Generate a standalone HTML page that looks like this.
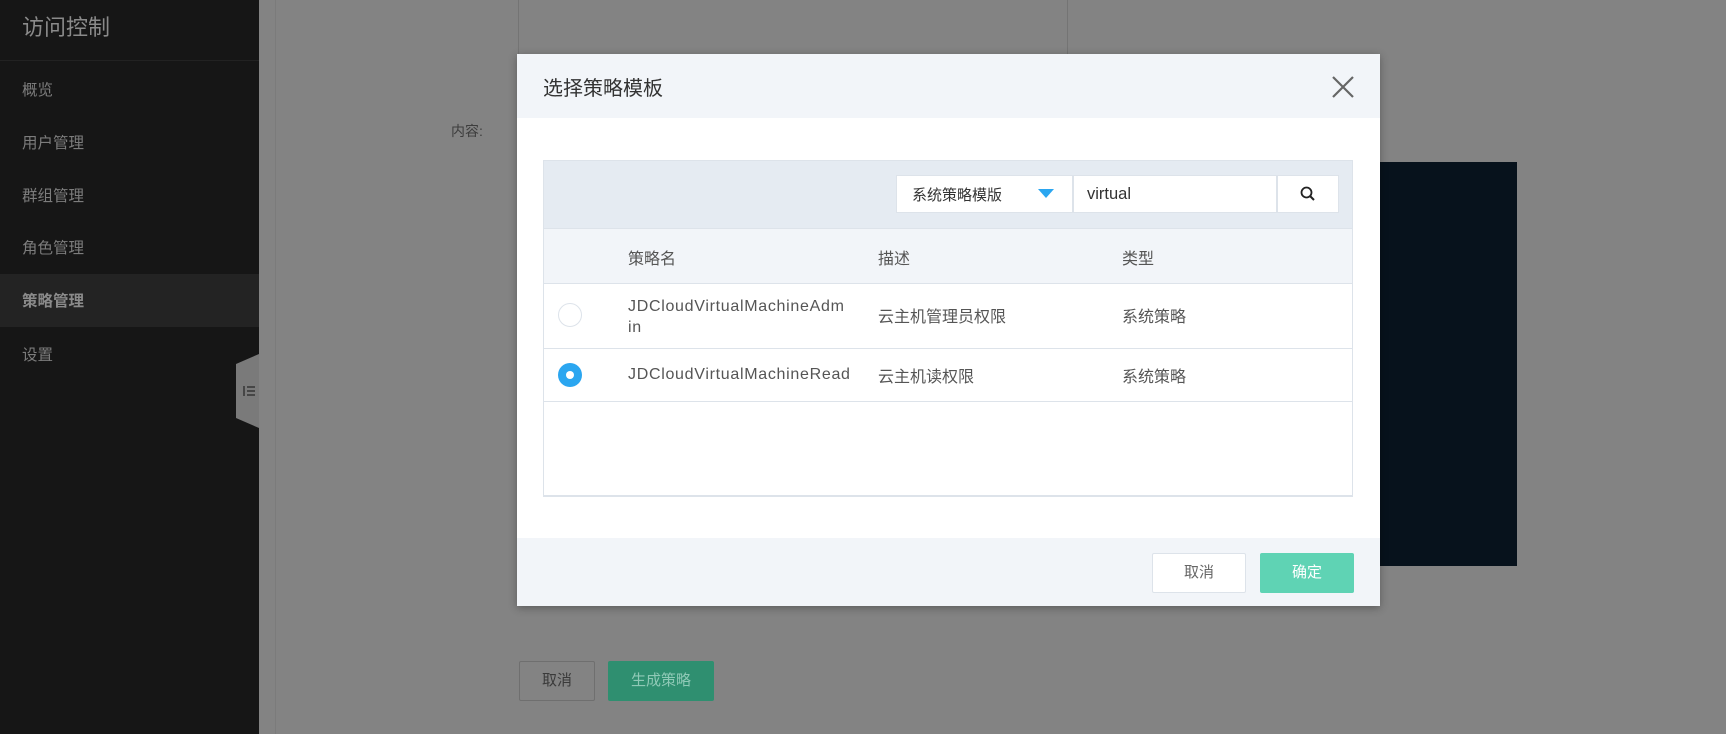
<!DOCTYPE html>
<html><head><meta charset="utf-8"><style>
*{margin:0;padding:0;box-sizing:border-box}
body{width:1726px;height:734px;overflow:hidden;position:relative;background:#838383;font-family:"Liberation Sans","Noto Sans CJK SC",sans-serif}
.abs{position:absolute}
.side{left:0;top:0;width:259px;height:734px;background:#161616}
.side .t{left:22px;top:10px;font-size:22px;color:#8a8a8a}
.side .line{left:0;top:60px;width:259px;height:1px;background:#222}
.mi{left:22px;font-size:15.5px;color:#7c7c7c}
.hl{left:0;top:274px;width:259px;height:53px;background:#232323}
.modal{left:517px;top:54px;width:863px;height:552px;background:#fff;box-shadow:0 2px 8px rgba(0,0,0,.3)}
.hd{left:0;top:0;width:863px;height:64px;background:#f2f5f9}
.ft{left:0;top:484px;width:863px;height:68px;background:#f2f5f9}
.txt{color:#555;font-size:16px;white-space:nowrap}
.lat{letter-spacing:0.7px}
</style></head><body>
<div class="abs side">
<div class="abs t">访问控制</div>
<div class="abs line"></div>
<div class="abs hl"></div>
<div class="abs mi" style="top:78px">概览</div>
<div class="abs mi" style="top:131px">用户管理</div>
<div class="abs mi" style="top:184px">群组管理</div>
<div class="abs mi" style="top:236px">角色管理</div>
<div class="abs mi" style="top:289px;font-weight:bold;color:#8a8a8a">策略管理</div>
<div class="abs mi" style="top:343px">设置</div>
</div>
<svg class="abs" style="left:236px;top:354px" width="24" height="74"><polygon points="23,0 23,74 0,64 0,10" fill="#7a7a7a"/><g stroke="#2a2a2a" stroke-width="1.3"><line x1="8" y1="32" x2="8" y2="42"/><line x1="11" y1="33" x2="19" y2="33"/><line x1="11" y1="37" x2="19" y2="37"/><line x1="11" y1="41" x2="19" y2="41"/></g></svg>
<div class="abs" style="left:275px;top:0;width:1px;height:734px;background:#7b7b7b"></div>
<div class="abs" style="left:518px;top:0;width:550px;height:54px;border-left:1px solid #747474;border-right:1px solid #747474"></div>
<div class="abs" style="left:451px;top:121px;font-size:14px;color:#3d3d3d">内容:</div>
<div class="abs" style="left:1380px;top:162px;width:137px;height:404px;background:#07121c"></div>
<div class="abs" style="left:519px;top:661px;width:76px;height:40px;border:1px solid #6f6f6f;border-radius:2px;font-size:15px;color:#3a3a3a;text-align:center;line-height:38px">取消</div>
<div class="abs" style="left:608px;top:661px;width:106px;height:40px;background:#2f8f70;border-radius:2px;font-size:15px;color:#8fc9b6;text-align:center;line-height:40px">生成策略</div>

<div class="abs modal">
<div class="abs hd"></div>
<div class="abs" style="left:26px;top:18px;font-size:20px;color:#333">选择策略模板</div>
<svg class="abs" style="left:815px;top:22px" width="22" height="22"><path d="M1 1L21 21M21 1L1 21" stroke="#666" stroke-width="2.2"/></svg>
<div class="abs" style="left:26px;top:106px;width:810px;height:337px;border:1px solid #dde3ea;border-bottom:2px solid #dde3ea">
 <div class="abs" style="left:0;top:0;width:808px;height:68px;background:#e5ebf2;border-bottom:1px solid #dde3ea"></div>
 <div class="abs" style="left:352px;top:14px;width:177px;height:38px;background:#fff;border:1px solid #dde3ea"></div>
 <div class="abs txt" style="left:368px;top:23px;font-size:15px;color:#333">系统策略模版</div>
 <svg class="abs" style="left:494px;top:28px" width="16" height="10"><polygon points="0,0 16,0 8,9" fill="#2ba6f0"/></svg>
 <div class="abs" style="left:529px;top:14px;width:204px;height:38px;background:#fff;border:1px solid #dde3ea"></div>
 <div class="abs txt" style="left:543px;top:24px;font-size:16.5px;color:#333">virtual</div>
 <div class="abs" style="left:733px;top:14px;width:62px;height:38px;background:#fff;border:1px solid #dde3ea"></div>
 <svg class="abs" style="left:756px;top:25px" width="16" height="16"><circle cx="6.5" cy="6.5" r="5" fill="none" stroke="#222" stroke-width="1.8"/><line x1="10" y1="10" x2="14" y2="14" stroke="#222" stroke-width="2"/></svg>
 <div class="abs" style="left:0;top:68px;width:808px;height:55px;background:#f2f5f9;border-bottom:1px solid #dde3ea"></div>
 <div class="abs txt" style="left:84px;top:84px">策略名</div>
 <div class="abs txt" style="left:334px;top:84px">描述</div>
 <div class="abs txt" style="left:578px;top:84px">类型</div>
 <div class="abs" style="left:0;top:187px;width:808px;height:1px;background:#dde3ea"></div>
 <div class="abs" style="left:0;top:240px;width:808px;height:1px;background:#dde3ea"></div>
 <div class="abs" style="left:14px;top:142px;width:24px;height:24px;border:1px solid #dde3ea;border-radius:50%"></div>
 <div class="abs txt lat" style="left:84px;top:135px;line-height:21px">JDCloudVirtualMachineAdm<br>in</div>
 <div class="abs txt" style="left:334px;top:142px">云主机管理员权限</div>
 <div class="abs txt" style="left:578px;top:142px">系统策略</div>
 <div class="abs" style="left:14px;top:202px;width:24px;height:24px;background:#2ba6f0;border-radius:50%"></div>
 <div class="abs" style="left:22px;top:210px;width:8px;height:8px;background:#fff;border-radius:50%"></div>
 <div class="abs txt lat" style="left:84px;top:205px">JDCloudVirtualMachineRead</div>
 <div class="abs txt" style="left:334px;top:202px">云主机读权限</div>
 <div class="abs txt" style="left:578px;top:202px">系统策略</div>
</div>
<div class="abs ft"></div>
<div class="abs" style="left:635px;top:499px;width:94px;height:40px;background:#fff;border:1px solid #dde3ea;border-radius:2px;text-align:center;line-height:38px;font-size:15px;color:#666">取消</div>
<div class="abs" style="left:743px;top:499px;width:94px;height:40px;background:#5fd3b4;border-radius:2px;text-align:center;line-height:40px;font-size:15px;color:#fff">确定</div>
</div>
</body></html>
